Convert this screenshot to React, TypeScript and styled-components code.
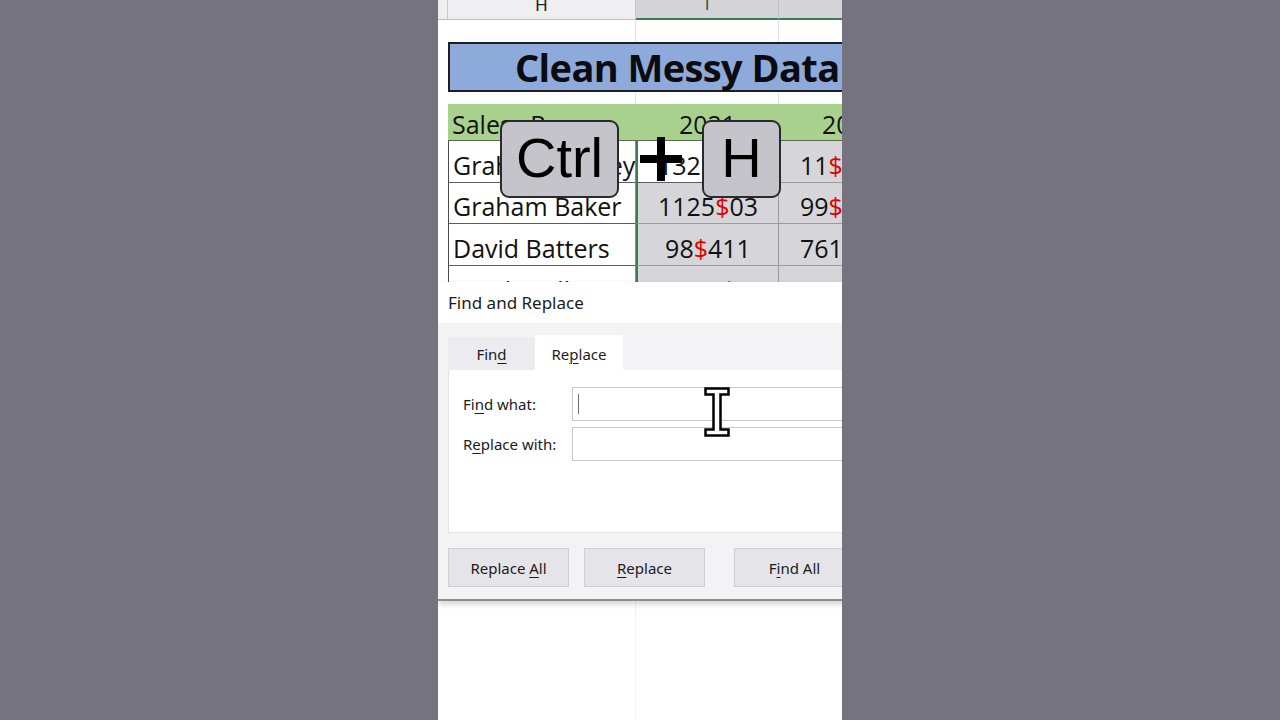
import React from "react";
import styled, { createGlobalStyle } from "styled-components";

const Global = createGlobalStyle`
  html, body { margin: 0; padding: 0; background: #75747e; }
  * { box-sizing: border-box; }
`;

const Page = styled.div`
  width: 1280px;
  height: 720px;
  display: flex;
  justify-content: center;
  background: #75747e;
  overflow: hidden;
`;

const Strip = styled.div`
  position: relative;
  width: 404px;
  height: 720px;
  background: #ffffff;
  overflow: hidden;
  display: flex;
  flex-direction: column;
  font-family: "Open Sans", "Noto Sans", sans-serif;
  color: #111;
`;

const Sheet = styled.div`
  height: 282px;
  flex-shrink: 0;
  overflow: hidden;
  display: flex;
  flex-direction: column;
`;

const COLS = "10px 188px 143px 143px";

const ColHeaderRow = styled.div`
  display: grid;
  grid-template-columns: ${COLS};
  height: 20px;
  flex-shrink: 0;
`;

const ColHeader = styled.div<{ $sel?: boolean }>`
  background: ${(p) => (p.$sel ? "#d4d3d7" : "#efeff1")};
  border-right: 1px solid ${(p) => (p.$sel ? "#c2c1c5" : "#c9c9cc")};
  border-bottom: ${(p) => (p.$sel ? "2px solid #3f7a52" : "1px solid #bdbdc1")};
  font-family: "Liberation Sans", Arial, sans-serif;
  font-size: 17px;
  line-height: 1;
  color: ${(p) => (p.$sel ? "#2f5c3f" : "#222")};
  display: flex;
  justify-content: center;
  align-items: flex-end;
  padding-bottom: 5px;
  overflow: hidden;
`;

const GridGap = styled.div<{ $h: number }>`
  display: grid;
  grid-template-columns: ${COLS};
  height: ${(p) => p.$h}px;
  flex-shrink: 0;
`;

const GridCell = styled.div<{ $line?: boolean }>`
  border-right: ${(p) => (p.$line ? "1px solid #e2e2e4" : "none")};
`;

const TitleBand = styled.div`
  margin-left: 10px;
  width: 520px;
  height: 50px;
  flex-shrink: 0;
  background: #8eaadb;
  border: 2px solid #1e1e24;
  display: flex;
  align-items: center;
  padding-left: 65px;
  font-family: "Open Sans", sans-serif;
  font-weight: 700;
  font-size: 38px;
  letter-spacing: -0.6px;
  white-space: nowrap;
  color: #0c0c10;
`;

const Table = styled.div`
  margin-left: 10px;
  display: grid;
  grid-template-columns: 188px 143px 143px;
  grid-auto-rows: min-content;
  width: 474px;
`;

const HeadCell = styled.div<{ $align?: string }>`
  height: 37px;
  background: #a9d18e;
  border-bottom: 1px solid #5b6b52;
  display: flex;
  align-items: center;
  justify-content: ${(p) => p.$align || "center"};
  padding-left: ${(p) => (p.$align === "flex-start" ? "4px" : "0")};
  padding-top: 3px;
  font-size: 25px;
  word-spacing: 12px;
  white-space: nowrap;
  overflow: hidden;
`;

const Cell = styled.div<{ $h: number; $sel?: boolean; $name?: boolean; $first?: boolean }>`
  height: ${(p) => p.$h}px;
  background: ${(p) => (p.$sel ? "#d6d5d9" : "#ffffff")};
  border-bottom: 1px solid ${(p) => (p.$sel ? "#9c9ca0" : "#5c5c60")};
  border-left: ${(p) =>
    p.$name ? "1px solid #4a4a4e" : p.$first ? "2px solid #3c7d52" : "none"};
  border-right: 1px solid ${(p) => (p.$name ? "#8a8a8e" : "#9c9ca0")};
  display: flex;
  align-items: center;
  justify-content: ${(p) => (p.$name ? "flex-start" : "center")};
  padding-left: ${(p) => (p.$name ? "4px" : "0")};
  padding-top: 6px;
  font-size: 25px;
  white-space: nowrap;
  overflow: visible;
`;

const Dollar = styled.span`
  color: #e00000;
`;

const KeyOverlay = styled.div`
  position: absolute;
  left: 62px;
  top: 120px;
  display: flex;
  align-items: center;
`;

const Key = styled.div<{ $w: number }>`
  width: ${(p) => p.$w}px;
  height: 78px;
  border: 2px solid #2a2a2e;
  border-radius: 9px;
  background: #c5c4ca;
  display: flex;
  align-items: center;
  justify-content: center;
  font-family: "Liberation Sans", Arial, sans-serif;
  font-size: 56px;
  color: #000;
  line-height: 1;
  padding-bottom: 2px;
`;

const PlusWrap = styled.div`
  width: 42px;
  height: 44px;
  margin: 0 20px 0 21px;
  display: flex;
`;

const Dialog = styled.div`
  width: 430px;
  flex-shrink: 0;
  display: flex;
  flex-direction: column;
  background: #f3f2f5;
  border-bottom: 2px solid #8e8e92;
  box-shadow: 0 3px 6px rgba(0, 0, 0, 0.18);
  font-family: "Noto Sans", "Open Sans", sans-serif;
  color: #1b1b1b;
  position: relative;
  z-index: 1;
`;

const DialogTitle = styled.div`
  height: 41px;
  background: #ffffff;
  display: flex;
  align-items: center;
  padding-left: 10px;
  font-size: 17px;
`;

const DialogBody = styled.div`
  padding: 12px 0 12px 10px;
  display: flex;
  flex-direction: column;
`;

const TabList = styled.div`
  display: flex;
  align-items: flex-end;
  height: 35px;
`;

const Tab = styled.div<{ $active?: boolean; $w: number }>`
  width: ${(p) => p.$w}px;
  height: ${(p) => (p.$active ? 35 : 33)}px;
  background: ${(p) => (p.$active ? "#ffffff" : "#ecebef")};
  display: flex;
  align-items: center;
  justify-content: center;
  font-size: 15px;
  padding-top: ${(p) => (p.$active ? "2px" : "0")};
`;

const Panel = styled.div`
  height: 163px;
  width: 420px;
  background: #ffffff;
  border: 1px solid #e4e4e6;
  border-top: none;
  padding: 17px 0 0 14px;
  display: flex;
  flex-direction: column;
  gap: 6px;
`;

const FieldRow = styled.div`
  display: grid;
  grid-template-columns: 109px 320px;
  align-items: center;
  height: 34px;
  font-size: 15px;
`;

const Input = styled.div`
  height: 34px;
  background: #fff;
  border: 1px solid #c8c8cb;
  display: flex;
  align-items: center;
  padding-left: 5px;
`;

const Caret = styled.span`
  width: 1px;
  height: 20px;
  background: #6a6a6a;
`;

const ButtonRow = styled.div`
  margin-top: 15px;
  display: flex;
  gap: 15px;
`;

const DlgButton = styled.div<{ $push?: boolean }>`
  width: 121px;
  height: 39px;
  flex-shrink: 0;
  margin-left: ${(p) => (p.$push ? "14px" : "0")};
  background: #e5e4e8;
  border: 1px solid #cfced2;
  display: flex;
  align-items: center;
  justify-content: center;
  font-size: 15px;
`;

const U = styled.span`
  text-decoration: underline;
  text-underline-offset: 3px;
  text-decoration-thickness: 1px;
`;

const BelowSheet = styled.div`
  flex: 1;
  display: grid;
  grid-template-columns: ${COLS};
`;

const FaintCell = styled.div<{ $line?: boolean }>`
  border-right: ${(p) => (p.$line ? "1px solid #f2f2f4" : "none")};
`;

const Cursor = styled.svg`
  position: absolute;
  left: 266px;
  top: 387px;
  z-index: 2;
`;

const money = (s: string) => {
  const i = s.indexOf("$");
  if (i < 0) return s;
  return (
    <>
      {s.slice(0, i)}
      <Dollar>$</Dollar>
      {s.slice(i + 1)}
    </>
  );
};

const rows = [
  { name: "Graham Dooley", a: "1325$67", b: "11$5890", h: 42 },
  { name: "Graham Baker", a: "1125$03", b: "99$4821", h: 41 },
  { name: "David Batters", a: "98$411", b: "761$124", h: 42 },
  { name: "Sarah Collins", a: "1023$5", b: "883$01", h: 42 },
];

export default function App() {
  return (
    <>
      <Global />
      <Page>
        <Strip>
          <Sheet>
            <ColHeaderRow>
              <ColHeader />
              <ColHeader>H</ColHeader>
              <ColHeader $sel>I</ColHeader>
              <ColHeader $sel>J</ColHeader>
            </ColHeaderRow>
            <GridGap $h={22}>
              <GridCell />
              <GridCell $line />
              <GridCell $line />
              <GridCell />
            </GridGap>
            <TitleBand>Clean Messy Data</TitleBand>
            <GridGap $h={12}>
              <GridCell />
              <GridCell $line />
              <GridCell $line />
              <GridCell />
            </GridGap>
            <Table>
              <HeadCell $align="flex-start">Sales Rep</HeadCell>
              <HeadCell>2021</HeadCell>
              <HeadCell>2022</HeadCell>
              {rows.map((r, i) => (
                <React.Fragment key={r.name}>
                  <Cell $h={r.h} $name>
                    {r.name}
                  </Cell>
                  <Cell $h={r.h} $sel={i > 0} $first>
                    {money(r.a)}
                  </Cell>
                  <Cell $h={r.h} $sel>
                    {money(r.b)}
                  </Cell>
                </React.Fragment>
              ))}
            </Table>
          </Sheet>

          <Dialog>
            <DialogTitle>Find and Replace</DialogTitle>
            <DialogBody>
              <TabList>
                <Tab $w={87}>
                  Fin<U>d</U>
                </Tab>
                <Tab $w={88} $active>
                  Re<U>p</U>lace
                </Tab>
              </TabList>
              <Panel>
                <FieldRow>
                  <span>
                    Fi<U>n</U>d what:
                  </span>
                  <Input>
                    <Caret />
                  </Input>
                </FieldRow>
                <FieldRow>
                  <span>
                    R<U>e</U>place with:
                  </span>
                  <Input />
                </FieldRow>
              </Panel>
              <ButtonRow>
                <DlgButton>
                  Replace&nbsp;<U>A</U>ll
                </DlgButton>
                <DlgButton>
                  <U>R</U>eplace
                </DlgButton>
                <DlgButton $push>
                  F<U>i</U>nd All
                </DlgButton>
              </ButtonRow>
            </DialogBody>
          </Dialog>

          <BelowSheet>
            <FaintCell />
            <FaintCell $line />
            <FaintCell />
            <FaintCell />
          </BelowSheet>

          <KeyOverlay>
            <Key $w={119}>Ctrl</Key>
            <PlusWrap>
              <svg width="42" height="44" viewBox="0 0 42 44">
                <rect x="0" y="18" width="42" height="8" fill="#000" />
                <rect x="17" y="0" width="8" height="44" fill="#000" />
              </svg>
            </PlusWrap>
            <Key $w={79}>H</Key>
          </KeyOverlay>

          <Cursor width="26" height="50" viewBox="0 0 26 50">
            <path
              d="M1.5 1.5 H24.5 V7.5 H16.5 V42.5 H24.5 V48.5 H1.5 V42.5 H9.5 V7.5 H1.5 Z"
              fill="#ffffff"
              stroke="#000"
              strokeWidth="2.5"
              strokeLinejoin="miter"
            />
          </Cursor>
        </Strip>
      </Page>
    </>
  );
}
